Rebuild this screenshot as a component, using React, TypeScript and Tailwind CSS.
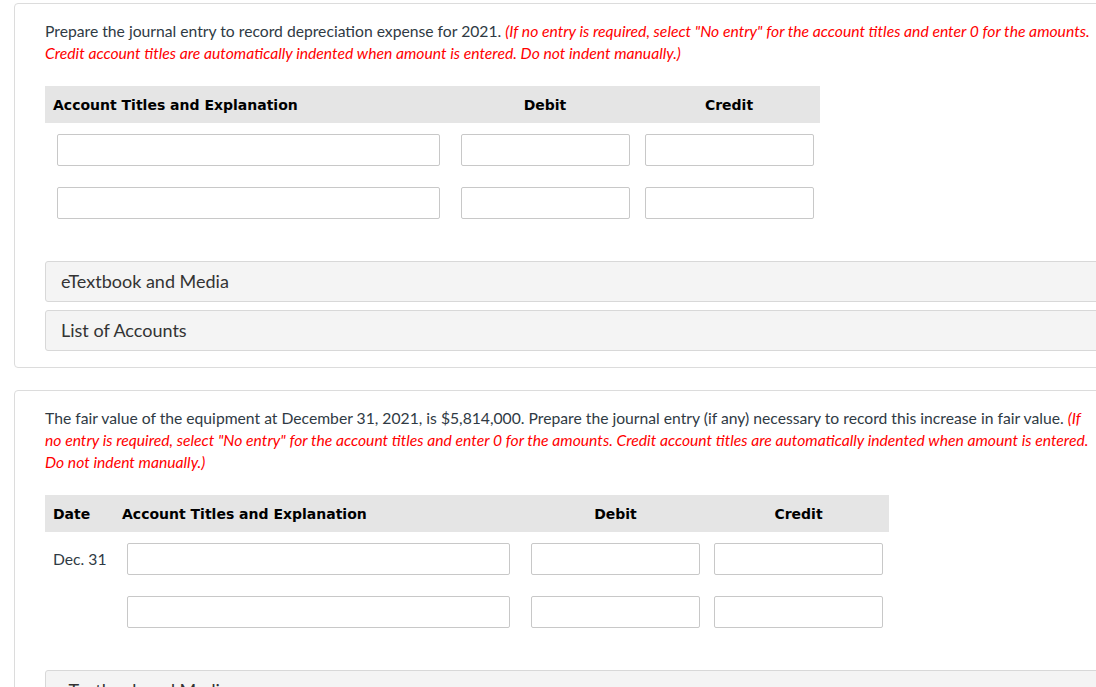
import React from "react";

const font = { fontFamily: "Lato, 'Open Sans', sans-serif" };
const headFont = { fontFamily: "'DejaVu Sans', Verdana, sans-serif" };

function Input({ w }: { w: string }) {
  return <div className={`${w} h-[32px] border border-[#c8c8c8] rounded-[2px] bg-white`} />;
}

function Bar({ label }: { label: string }) {
  return (
    <div className="h-[41px] border border-[#d8d8d8] rounded-l-[3px] bg-[#f4f4f4] flex items-center pl-[15px] text-[18px] text-[#333]">
      {label}
    </div>
  );
}

export default function App() {
  return (
    <div className="w-[1096px] h-[687px] overflow-hidden bg-white" style={font}>
      <div className="pt-[3px] pl-[14px]">
        {/* Card 1 */}
        <div className="w-[1140px] border border-[#dcdcdc] rounded-[4px] pl-[30px] pt-[16px] pb-[16px]">
          <p className="text-[15.7px] leading-[22px] text-[#2f3a44] whitespace-nowrap">
            Prepare the journal entry to record depreciation expense for 2021.{" "}
            <i className="text-[#ff0000]">
              (If no entry is required, select "No entry" for the account titles and enter 0 for the amounts.
              <br />
              Credit account titles are automatically indented when amount is entered. Do not indent manually.)
            </i>
          </p>
          <div className="mt-[22px] w-[775px]">
            <div className="grid grid-cols-[407px_186px_182px] h-[37px] pt-[2px] bg-[#e5e5e5] items-center text-[14px] font-bold text-black" style={headFont}>
              <div className="pl-[8px]">Account Titles and Explanation</div>
              <div className="text-center">Debit</div>
              <div className="text-center">Credit</div>
            </div>
            {[0, 1].map((r) => (
              <div key={r} className="grid grid-cols-[407px_186px_182px] pt-[11px] pb-[10px] items-center">
                <div className="flex justify-center"><Input w="w-[383px]" /></div>
                <div className="flex justify-center"><Input w="w-[169px]" /></div>
                <div className="flex justify-center"><Input w="w-[169px]" /></div>
              </div>
            ))}
          </div>
          <div className="mt-[32px] flex flex-col gap-[8px]">
            <Bar label="eTextbook and Media" />
            <Bar label="List of Accounts" />
          </div>
        </div>

        {/* Card 2 */}
        <div className="mt-[22px] w-[1140px] border border-[#dcdcdc] rounded-[4px] pl-[30px] pt-[16px] pb-[16px]">
          <p className="text-[15.7px] leading-[22px] text-[#2f3a44] whitespace-nowrap">
            The fair value of the equipment at December 31, 2021, is $5,814,000. Prepare the journal entry (if any) necessary to record this increase in fair value.{" "}
            <i className="text-[#ff0000]">
              (If
              <br />
              no entry is required, select "No entry" for the account titles and enter 0 for the amounts. Credit account titles are automatically indented when amount is entered.
              <br />
              Do not indent manually.)
            </i>
          </p>
          <div className="mt-[22px] w-[844px]">
            <div className="grid grid-cols-[69px_409px_185px_181px] h-[37px] pt-[2px] bg-[#e5e5e5] items-center text-[14px] font-bold text-black" style={headFont}>
              <div className="pl-[8px]">Date</div>
              <div className="pl-[8px]">Account Titles and Explanation</div>
              <div className="text-center">Debit</div>
              <div className="text-center">Credit</div>
            </div>
            {[0, 1].map((r) => (
              <div key={r} className="grid grid-cols-[69px_409px_185px_181px] pt-[11px] pb-[10px] items-center">
                <div className="pl-[8px] pt-[1px] text-[15.7px] text-[#2f3a44]">{r === 0 ? "Dec. 31" : ""}</div>
                <div className="flex justify-center"><Input w="w-[383px]" /></div>
                <div className="flex justify-center"><Input w="w-[169px]" /></div>
                <div className="flex justify-center"><Input w="w-[169px]" /></div>
              </div>
            ))}
          </div>
          <div className="mt-[32px] flex flex-col gap-[8px]">
            <Bar label="eTextbook and Media" />
            <Bar label="List of Accounts" />
          </div>
        </div>
      </div>
    </div>
  );
}
